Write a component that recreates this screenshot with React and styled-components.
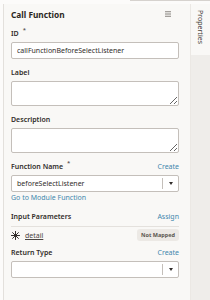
import React from 'react'
import styled, { createGlobalStyle } from 'styled-components'

const GlobalStyle = createGlobalStyle`
  html, body {
    margin: 0;
    padding: 0;
    background: #fcfbfa;
  }
  body {
    font-family: "Noto Sans", "Liberation Sans", sans-serif;
    color: #312d2a;
  }
  * { box-sizing: border-box; }
`

const Page = styled.div`
  width: 210px;
  height: 300px;
  display: flex;
  flex-direction: column;
  overflow: hidden;
`

const TopBar = styled.div`
  height: 4px;
  display: flex;
  justify-content: flex-end;
`

const TopEdge = styled.div`
  width: 80px;
  height: 1px;
  background: #d6d2ce;
`

const Body = styled.div`
  flex: 1;
  display: flex;
  padding-left: 3px;
`

const Panel = styled.section`
  flex: 1;
  background: #f9f8f6;
  border-left: 1px solid #e3e0dc;
  padding: 0 11px 0 7px;
`

const Header = styled.div`
  height: 24px;
  display: flex;
  align-items: center;
  justify-content: space-between;
  padding-bottom: 4px;
`

const Title = styled.h2`
  margin: 0;
  font-size: 8.3px;
  font-weight: 700;
  color: #2b2723;
`

const MenuButton = styled.span`
  display: flex;
  margin-right: 8px;
  color: #6a655f;
`

const Field = styled.div`
  margin-top: ${p => (p.$first ? 0 : 8)}px;
`

const LabelRow = styled.div`
  height: 10px;
  margin-bottom: 4px;
  display: flex;
  align-items: center;
  justify-content: space-between;
`

const Label = styled.label`
  font-size: 7px;
  font-weight: 600;
  color: #312d2a;
  display: flex;
  align-items: flex-start;
`

const Required = styled.span`
  font-size: 6px;
  margin-left: 4px;
  margin-top: -3px;
  color: #5b5652;
`

const Link = styled.a`
  font-size: 7px;
  color: #3f87ad;
  text-decoration: none;
`

const TextInput = styled.input`
  display: block;
  width: 100%;
  height: 17px;
  border: 1px solid #c4bfba;
  border-radius: 2px;
  background: #fff;
  padding: 0 5px;
  font-family: inherit;
  font-size: 7px;
  color: #312d2a;
  outline: none;
`

const TextArea = styled.textarea`
  display: block;
  width: 100%;
  height: 25px;
  border: 1px solid #c4bfba;
  border-radius: 2px;
  background: #fff;
  resize: vertical;
  font-family: inherit;
  font-size: 7px;
  outline: none;
  margin: 0;
`

const SelectBox = styled.div`
  height: 17px;
  display: flex;
  align-items: center;
  border: 1px solid #c4bfba;
  border-radius: 2px;
  background: #fff;
`

const SelectValue = styled.span`
  flex: 1;
  padding: 0 5px;
  font-size: 7px;
  color: #312d2a;
`

const SelectToggle = styled.span`
  width: 16px;
  height: 11px;
  border-left: 1px solid #c4bfba;
  display: flex;
  align-items: center;
  justify-content: center;
`

const Arrow = styled.span`
  width: 0;
  height: 0;
  border-left: 2.5px solid transparent;
  border-right: 2.5px solid transparent;
  border-top: 3px solid #312d2a;
`

const ModuleLink = styled(Link)`
  display: block;
  margin-top: 1px;
  line-height: 10px;
`

const SectionHead = styled(LabelRow)`
  margin-top: 7px;
  margin-bottom: 0;
  height: 13px;
  padding-bottom: 3px;
  box-sizing: content-box;
  border-bottom: 1px solid #e4e1dd;
`

const ParamRow = styled.div`
  height: 16px;
  display: flex;
  align-items: center;
  gap: 5px;
`

const ParamName = styled.span`
  flex: 1;
  font-size: 7px;
  color: #4a4541;
  text-decoration: underline;
  text-underline-offset: 1px;
`

const Badge = styled.span`
  background: #ece9e5;
  border-radius: 3px;
  padding: 2px 4px;
  font-size: 5.5px;
  font-weight: 700;
  color: #5a5550;
`

const ReturnField = styled.div`
  margin-top: 4px;
`

const Sidebar = styled.aside`
  width: 20px;
  display: flex;
  flex-direction: column;
  border-left: 1px solid #ebe8e4;
`

const Tab = styled.div`
  height: 51px;
  background: #f9f8f6;
  display: flex;
  justify-content: center;
  padding-top: 6px;
`

const TabText = styled.span`
  writing-mode: vertical-rl;
  font-size: 7px;
  color: #4a4541;
`

const TabFill = styled.div`
  flex: 1;
  background: #efedea;
`

const Hamburger = () => (
  <svg width="6" height="6" viewBox="0 0 6 6">
    <path d="M0 0.75H6M0 3H6M0 5.25H6" stroke="currentColor" strokeWidth="0.8" />
  </svg>
)

const AnyType = () => (
  <svg width="9" height="9" viewBox="0 0 10 10">
    <path
      d="M5 0.5V9.5M0.5 5H9.5M1.8 1.8L8.2 8.2M8.2 1.8L1.8 8.2"
      stroke="#312d2a"
      strokeWidth="1.1"
      strokeLinecap="round"
    />
  </svg>
)

const Select = ({ value }) => (
  <SelectBox>
    <SelectValue>{value}</SelectValue>
    <SelectToggle>
      <Arrow />
    </SelectToggle>
  </SelectBox>
)

export default function App() {
  return (
    <Page>
      <GlobalStyle />
      <TopBar>
        <TopEdge />
      </TopBar>
      <Body>
        <Panel>
          <Header>
            <Title>Call Function</Title>
            <MenuButton>
              <Hamburger />
            </MenuButton>
          </Header>

          <Field $first>
            <LabelRow>
              <Label>ID<Required>*</Required></Label>
            </LabelRow>
            <TextInput defaultValue="callFunctionBeforeSelectListener" />
          </Field>

          <Field>
            <LabelRow>
              <Label>Label</Label>
            </LabelRow>
            <TextArea />
          </Field>

          <Field>
            <LabelRow>
              <Label>Description</Label>
            </LabelRow>
            <TextArea />
          </Field>

          <Field>
            <LabelRow>
              <Label>Function Name<Required>*</Required></Label>
              <Link>Create</Link>
            </LabelRow>
            <Select value="beforeSelectListener" />
          </Field>
          <ModuleLink>Go to Module Function</ModuleLink>

          <SectionHead>
            <Label>Input Parameters</Label>
            <Link>Assign</Link>
          </SectionHead>
          <ParamRow>
            <AnyType />
            <ParamName>detail</ParamName>
            <Badge>Not Mapped</Badge>
          </ParamRow>

          <ReturnField>
            <LabelRow>
              <Label>Return Type</Label>
              <Link>Create</Link>
            </LabelRow>
            <Select value="" />
          </ReturnField>
        </Panel>
        <Sidebar>
          <Tab>
            <TabText>Properties</TabText>
          </Tab>
          <TabFill />
        </Sidebar>
      </Body>
    </Page>
  )
}
